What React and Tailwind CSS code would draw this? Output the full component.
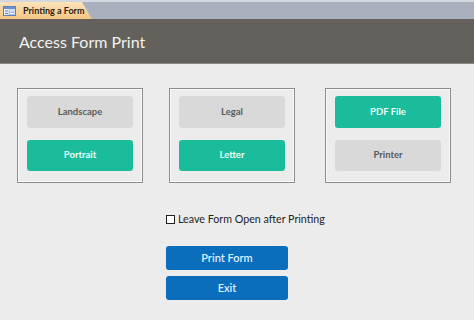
import React, { useState } from "react";

const font = { fontFamily: 'Lato, "Open Sans", sans-serif' };

function FormIcon() {
    return (
        <svg width="13" height="10" viewBox="0 0 13 10">
            <rect x="0.5" y="0.5" width="12" height="9" fill="#eef3fa" stroke="#5b7fb8" />
            <rect x="1" y="1" width="11" height="2" fill="#6d93cf" />
            <rect x="2" y="4.5" width="3" height="1" fill="#5b7fb8" />
            <rect x="6" y="4" width="5" height="2" fill="#ffffff" stroke="#7a9ad0" strokeWidth="0.6" />
            <rect x="2" y="7" width="3" height="1" fill="#5b7fb8" />
            <rect x="6" y="6.7" width="5" height="2" fill="#ffffff" stroke="#7a9ad0" strokeWidth="0.6" />
        </svg>
    );
}

function OptionButton({ label, active, onClick }) {
    return (
        <button
            onClick={onClick}
            className={
                "w-full h-[32px] rounded-[3px] text-[9.5px] font-bold " +
                (active ? "bg-[#1abc9c] text-[#eafff9]" : "bg-[#d9d9d9] text-[#5a5a5a]")
            }
        >
            {label}
        </button>
    );
}

function OptionGroup({ options, value, onChange, className }) {
    return (
        <div className={"border border-[#8c8c8c] shadow-[inset_0_0_0_1px_#fafafa] w-[126px] h-[95px] px-[9px] pt-[7px] pb-[11px] flex flex-col gap-[12px] " + className}>
            {options.map((opt) => (
                <OptionButton key={opt} label={opt} active={value === opt} onClick={() => onChange(opt)} />
            ))}
        </div>
    );
}

export default function App() {
    const [orientation, setOrientation] = useState("Portrait");
    const [paper, setPaper] = useState("Letter");
    const [output, setOutput] = useState("PDF File");
    const [leaveOpen, setLeaveOpen] = useState(false);

    return (
        <div className="w-[474px] h-[320px] bg-[#ececec] overflow-hidden" style={font}>
            {/* Tab strip */}
            <div className="h-[19px] bg-[#aab0bd] border-t-2 border-[#d3d7de] flex items-end">
                <div className="h-[17px] w-[92px] pl-[3px] flex items-center gap-[7px] bg-gradient-to-b from-[#fce3bb] to-[#f6c581] [clip-path:polygon(0_0,89%_0,100%_100%,0_100%)]">
                    <FormIcon />
                    <span className="text-[9px] font-bold text-[#2a2218] whitespace-nowrap">Printing a Form</span>
                </div>
            </div>

            {/* Header */}
            <div className="h-[45px] bg-[#64615c] border-b border-[#8a8884] flex items-center pl-[19px]">
                <h1 className="text-[16px] text-[#f2f2f2] leading-none mt-[1px]">Access Form Print</h1>
            </div>

            {/* Option groups */}
            <div className="flex mt-[24px] pl-[17px]">
                <OptionGroup options={["Landscape", "Portrait"]} value={orientation} onChange={setOrientation} />
                <OptionGroup options={["Legal", "Letter"]} value={paper} onChange={setPaper} className="ml-[26px] w-[125px]" />
                <OptionGroup options={["PDF File", "Printer"]} value={output} onChange={setOutput} className="ml-[30px] w-[125px]" />
            </div>

            {/* Checkbox */}
            <label className="flex items-center gap-[3px] ml-[166px] mt-[30px] h-[12px] cursor-pointer">
                <span
                    onClick={() => setLeaveOpen(!leaveOpen)}
                    className="w-[9px] h-[9px] border border-[#222] bg-white flex items-center justify-center text-[8px] leading-none"
                >
                    {leaveOpen ? "✓" : ""}
                </span>
                <span className="text-[10.7px] text-[#1e1e1e]">Leave Form Open after Printing</span>
            </label>

            {/* Actions */}
            <div className="ml-[166px] mt-[21px] w-[122px] flex flex-col gap-[6px]">
                <button className="h-[24px] rounded-[3px] bg-[#0b6ebd] text-[11px] font-semibold text-[#dcefff]">Print Form</button>
                <button className="h-[24px] rounded-[3px] bg-[#0b6ebd] text-[11px] font-semibold text-[#dcefff]">Exit</button>
            </div>
        </div>
    );
}
